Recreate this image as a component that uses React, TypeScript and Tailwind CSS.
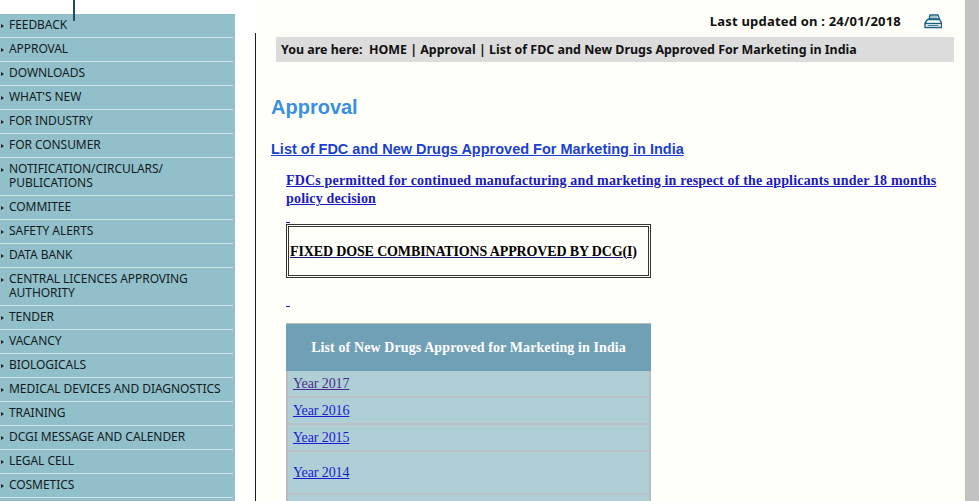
const tahoma = "font-['Noto_Sans','Liberation_Sans',sans-serif]";

const menu = [
  'FEEDBACK',
  'APPROVAL',
  'DOWNLOADS',
  "WHAT'S NEW",
  'FOR INDUSTRY',
  'FOR CONSUMER',
  'NOTIFICATION/CIRCULARS/\nPUBLICATIONS',
  'COMMITEE',
  'SAFETY ALERTS',
  'DATA BANK',
  'CENTRAL LICENCES APPROVING\nAUTHORITY',
  'TENDER',
  'VACANCY',
  'BIOLOGICALS',
  'MEDICAL DEVICES AND DIAGNOSTICS',
  'TRAINING',
  'DCGI MESSAGE AND CALENDER',
  'LEGAL CELL',
  'COSMETICS',
];

const years = [
  { label: 'Year 2017', h: 'h-[27px]', color: 'text-[#4b2a8a]' },
  { label: 'Year 2016', h: 'h-[27px]', color: 'text-[#1a1ad0]' },
  { label: 'Year 2015', h: 'h-[27px]', color: 'text-[#1a1ad0]' },
  { label: 'Year 2014', h: 'h-[43px]', color: 'text-[#1a1ad0]' },
  { label: '', h: 'h-[27px]', color: '' },
];

function PrinterIcon() {
  return (
    <svg width="18" height="15" viewBox="0 0 18 15" fill="none" stroke="#1d5f82" strokeWidth="1.4">
      <path d="M5 5.500 6 1h8l1.500 4.500" />
      <path d="M3.500 5.500h12l2 3.500v4.500H1V9z" />
      <path d="M1 9.500h16.500" />
      <path d="M6.500 3h6.500M6 4.500h8" strokeWidth="0.8" />
      <path d="M3.500 11.500h11" strokeWidth="0.8" />
    </svg>
  );
}

export default function App() {
  return (
    <div className="h-[501px] w-[979px] overflow-hidden flex bg-[#fffffa] relative">
      {/* left menu */}
      <div className="w-[235px] shrink-0 pt-[14px] bg-white">
        <div className={`${tahoma} h-full bg-[#92c0ca] text-[12px] leading-[14px] tracking-[-0.06px] text-[#111c22]`}>
          {menu.map((label, i) => (
            <div key={i} className="relative mr-[2px] border-b border-[#cfe3e7] pl-[9px] pt-[4px] pb-[5px]">
              <span className="absolute left-[1px] top-[10px] border-y-[2px] border-l-[3px] border-y-transparent border-l-[#222]" />
              <div className="whitespace-pre">{label}</div>
            </div>
          ))}
        </div>
      </div>
      <div className="absolute left-[73px] top-0 h-[21px] w-[2px] bg-[#234a63]" />

      {/* white gutter + rule */}
      <div className="w-[20px] shrink-0 bg-white" />
      <div className="mt-[33px] w-[1px] shrink-0 bg-[#1a1a2e]" />

      {/* content */}
      <div className="w-[709px] shrink-0 font-['Liberation_Sans',sans-serif]">
        <div className={`${tahoma} flex h-[37px] items-start justify-end pt-[12px] pr-[23px] text-[13px] font-bold leading-[18px] tracking-[0.2px] text-[#111]`}>
          <span>Last updated on : 24/01/2018</span>
          <span className="ml-[23px] mt-[2px]"><PrinterIcon /></span>
        </div>
        <div className={`${tahoma} ml-[20px] mr-[11px] h-[25px] bg-[#dcdcdc] pl-[5px] text-[12.45px] font-bold leading-[25px] text-[#111] whitespace-nowrap`}>
          You are here:&nbsp; HOME | Approval | List of FDC and New Drugs Approved For Marketing in India
        </div>

        <h1 className="ml-[15px] mt-[33px] text-[20px] font-bold leading-[24px] text-[#3a8fe0]">Approval</h1>
        <a className="ml-[15px] mt-[21px] block text-[14.5px] font-bold leading-[18px] text-[#1a3fd0] underline">
          List of FDC and New Drugs Approved For Marketing in India
        </a>

        <div className="ml-[30px] font-['Liberation_Serif',serif]">
          <a className="mt-[14px] block w-[660px] text-[14px] font-bold leading-[18px] tracking-[0.17px] text-[#1a1ac0] underline">
            FDCs permitted for continued manufacturing and marketing in respect of the applicants under 18 months policy decision
          </a>
          <div className="mt-[8px] mb-[1px] h-[7px] w-[4px] border-b border-[#1a1ac0]" />
          <div className="flex h-[54px] w-[365px] items-center border-[3px] border-double border-[#333] pl-[1px]">
            <a className="text-[14px] font-bold tracking-[-0.14px] text-black underline decoration-[#1a1a70]">FIXED DOSE COMBINATIONS APPROVED BY DCG(I)</a>
          </div>
          <div className="mt-[28px] h-[1px] w-[4px] bg-[#1a1ac0]" />

          <div className="mt-[16px] w-[365px] border-t border-[#b7bcc0]">
            <div className="flex h-[47px] items-center justify-center bg-[#6fa0b6] text-[14px] font-bold tracking-[0.1px] text-white">
              List of New Drugs Approved for Marketing in India
            </div>
            <div className="border-x-2 border-[#b7bcc0] bg-[#afcfd6]">
              {years.map((y, i) => (
                <div key={i} className={`${y.h} flex items-center border-b-2 border-[#b9c0c6] pl-[5px] text-[14px] tracking-[-0.1px]`}>
                  <a className={`${y.color} underline`}>{y.label}</a>
                </div>
              ))}
            </div>
          </div>
        </div>
      </div>

      {/* scrollbar */}
      <div className="w-[14px] shrink-0 bg-[#c2c2c2]" />
    </div>
  );
}
